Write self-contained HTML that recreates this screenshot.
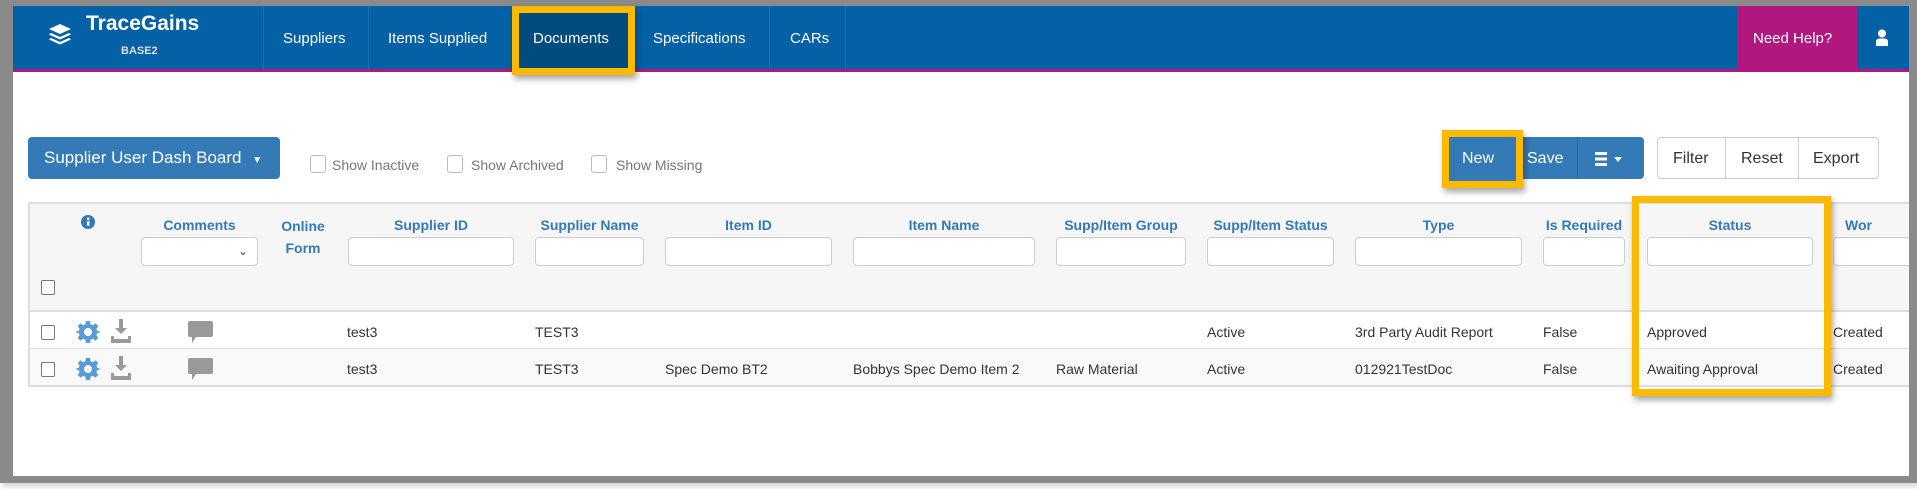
<!DOCTYPE html>
<html><head><meta charset="utf-8"><style>
*{box-sizing:border-box;margin:0;padding:0}
body{width:1917px;height:489px;background:#fff;position:relative;overflow:hidden;font-family:"Liberation Sans",sans-serif}
.a{position:absolute}
.frame{left:0;top:0;width:1917px;height:483px;border:solid #8a8a8a;border-width:6px 8px 7px 13px;box-shadow:2px 4px 4px rgba(0,0,0,.15)}
.nav{left:13px;top:6px;width:1896px;height:63px;background:#0461a5}
.mag{left:13px;top:69px;width:1896px;height:3px;background:#b0177f}
.nt{color:#fff;font-size:15px;top:30px}
.dv{top:6px;width:1px;height:63px;background:#1c70ad}
.hd{color:#337ab7;font-weight:bold;font-size:14px;text-align:center;top:217px}
.in{top:237px;height:29px;background:#fff;border:1px solid #ccc;border-radius:4px}
.td{font-size:14px;color:#333}
.cb{width:13px;height:13px;border:1px solid #777;border-radius:2px;background:#fff}
.y{border:7px solid #fbb900;box-shadow:2px 4px 6px rgba(0,0,0,.35)}
</style></head><body>
<div class="a frame"></div>
<div class="a nav"></div>
<div class="a mag"></div>
<svg class="a" style="left:47px;top:22px" width="26" height="26" viewBox="0 0 26 26"><path d="M13 2L24 7L13 12L2 7Z" fill="#fff"/><path d="M4 11L13 15L22 11L24 12.5L13 17.5L2 12.5Z" fill="#fff"/><path d="M4 16L13 20L22 16L24 17.5L13 22.5L2 17.5Z" fill="#fff"/></svg>
<div class="a" style="left:86px;top:12px;color:#fff;font-size:21px;font-weight:bold">TraceGains</div>
<div class="a" style="left:121px;top:45px;color:#ddd;font-size:11px;font-weight:bold">BASE2</div>
<div class="a dv" style="left:263px"></div><div class="a dv" style="left:368px"></div><div class="a dv" style="left:769px"></div><div class="a dv" style="left:845px"></div>
<div class="a nt" style="left:283px">Suppliers</div>
<div class="a nt" style="left:388px">Items Supplied</div>
<div class="a" style="left:512px;top:6px;width:123px;height:68px;background:#004b80" ></div>
<div class="a y" style="left:512px;top:6px;width:123px;height:69px"></div>
<div class="a nt" style="left:533px">Documents</div>
<div class="a nt" style="left:653px">Specifications</div>
<div class="a nt" style="left:790px">CARs</div>
<div class="a" style="left:1737px;top:6px;width:120px;height:63px;background:#b0177f"></div>
<div class="a nt" style="left:1753px">Need Help?</div>
<svg class="a" style="left:1875px;top:29px" width="14" height="17" viewBox="0 0 14 17"><circle cx="7" cy="4.5" r="4" fill="#fff"/><path d="M1 17V13Q1 9.5 4.5 9.5H9.5Q13 9.5 13 13V17Z" fill="#fff"/></svg>

<div class="a" style="left:28px;top:137px;width:252px;height:42px;background:#337ab7;border-radius:4px;color:#fff;font-size:17px;padding:11px 0 0 16px">Supplier User Dash Board <span style="font-size:10px;margin-left:6px">▼</span></div>
<div class="a cb" style="left:310px;top:155px;width:16px;height:18px;border-color:#bbb;border-radius:3px"></div><div class="a" style="left:332px;top:157px;color:#777;font-size:14px">Show Inactive</div>
<div class="a cb" style="left:447px;top:155px;width:16px;height:18px;border-color:#bbb;border-radius:3px"></div><div class="a" style="left:471px;top:157px;color:#777;font-size:14px">Show Archived</div>
<div class="a cb" style="left:591px;top:155px;width:16px;height:18px;border-color:#bbb;border-radius:3px"></div><div class="a" style="left:616px;top:157px;color:#777;font-size:14px">Show Missing</div>

<div class="a" style="left:1442px;top:137px;width:202px;height:42px;background:#337ab7;border-radius:4px"></div>
<div class="a" style="left:1577px;top:137px;width:1px;height:42px;background:#2a69a0"></div>
<div class="a y" style="left:1442px;top:130px;width:81px;height:58px;background:#337ab7"></div>
<div class="a" style="left:1462px;top:150px;color:#fff;font-size:16px">New</div>
<div class="a" style="left:1527px;top:150px;color:#fff;font-size:16px">Save</div>
<svg class="a" style="left:1595px;top:152px" width="32" height="14"><rect x="0" y="0" width="12" height="3" fill="#fff"/><rect x="0" y="5.5" width="12" height="3" fill="#fff"/><rect x="0" y="11" width="12" height="3" fill="#fff"/><path d="M19 5H27L23 10Z" fill="#fff"/></svg>
<div class="a" style="left:1657px;top:137px;width:222px;height:42px;border:1px solid #ccc;border-radius:4px"></div>
<div class="a" style="left:1725px;top:137px;width:1px;height:42px;background:#ccc"></div>
<div class="a" style="left:1798px;top:137px;width:1px;height:42px;background:#ccc"></div>
<div class="a" style="left:1673px;top:150px;color:#333;font-size:16px">Filter</div>
<div class="a" style="left:1741px;top:150px;color:#333;font-size:16px">Reset</div>
<div class="a" style="left:1813px;top:150px;color:#333;font-size:16px">Export</div>

<div class="a" style="left:28px;top:202px;width:1881px;height:110px;background:#f6f6f6;border-top:2px solid #ddd;border-left:2px solid #ddd;border-bottom:2px solid #ddd"></div>
<div class="a" style="left:28px;top:312px;width:1881px;height:37px;background:#fff;border-left:2px solid #ddd;border-bottom:1px solid #ddd"></div>
<div class="a" style="left:28px;top:349px;width:1881px;height:38px;background:#f9f9f9;border-left:2px solid #ddd;border-bottom:2px solid #ddd"></div>

<svg class="a" style="left:81px;top:215px" width="14" height="14"><circle cx="7" cy="7" r="7" fill="#337ab7"/><rect x="6" y="6" width="2.4" height="5" fill="#fff"/><circle cx="7.2" cy="3.8" r="1.3" fill="#fff"/></svg>
<div class="a hd" style="left:141px;width:117px">Comments</div>
<div class="a in" style="left:141px;width:117px"></div><div class="a" style="left:238px;top:244px;color:#444;font-size:12px">⌄</div>
<div class="a hd" style="left:278px;width:50px;line-height:22px;top:215px">Online<br>Form</div>
<div class="a hd" style="left:348px;width:166px">Supplier ID</div><div class="a in" style="left:348px;width:166px"></div>
<div class="a hd" style="left:535px;width:109px">Supplier Name</div><div class="a in" style="left:535px;width:109px"></div>
<div class="a hd" style="left:665px;width:167px">Item ID</div><div class="a in" style="left:665px;width:167px"></div>
<div class="a hd" style="left:853px;width:182px">Item Name</div><div class="a in" style="left:853px;width:182px"></div>
<div class="a hd" style="left:1050px;width:142px">Supp/Item Group</div><div class="a in" style="left:1056px;width:130px"></div>
<div class="a hd" style="left:1202px;width:137px">Supp/Item Status</div><div class="a in" style="left:1207px;width:127px"></div>
<div class="a hd" style="left:1355px;width:167px">Type</div><div class="a in" style="left:1355px;width:167px"></div>
<div class="a hd" style="left:1538px;width:92px">Is Required</div><div class="a in" style="left:1543px;width:82px"></div>
<div class="a hd" style="left:1647px;width:166px">Status</div><div class="a in" style="left:1647px;width:166px"></div>
<div class="a hd" style="left:1845px">Wor</div><div class="a in" style="left:1833px;width:90px"></div>
<div class="a cb" style="left:41px;top:280px;width:14px;height:15px"></div>

<div class="a cb" style="left:41px;top:325px;width:14px;height:15px"></div>
<div class="a cb" style="left:41px;top:362px;width:14px;height:15px"></div>
<svg class="a" style="left:76px;top:320px" width="24" height="24" viewBox="0 0 24 24"><path fill="#5b9bd5" fill-rule="evenodd" d="M10 1H14L14.6 4.3L16.8 5.2L19.5 3.3L22.3 6.1L20.4 8.8L21.3 11L24 11.5V12.5L21.3 13L20.4 15.2L22.3 17.9L19.5 20.7L16.8 18.8L14.6 19.7L14 23H10L9.4 19.7L7.2 18.8L4.5 20.7L1.7 17.9L3.6 15.2L2.7 13L0 12.5V11.5L2.7 11L3.6 8.8L1.7 6.1L4.5 3.3L7.2 5.2L9.4 4.3Z M12 8A4 4 0 1 0 12 16A4 4 0 1 0 12 8Z"/></svg>
<svg class="a" style="left:76px;top:357px" width="24" height="24" viewBox="0 0 24 24"><path fill="#5b9bd5" fill-rule="evenodd" d="M10 1H14L14.6 4.3L16.8 5.2L19.5 3.3L22.3 6.1L20.4 8.8L21.3 11L24 11.5V12.5L21.3 13L20.4 15.2L22.3 17.9L19.5 20.7L16.8 18.8L14.6 19.7L14 23H10L9.4 19.7L7.2 18.8L4.5 20.7L1.7 17.9L3.6 15.2L2.7 13L0 12.5V11.5L2.7 11L3.6 8.8L1.7 6.1L4.5 3.3L7.2 5.2L9.4 4.3Z M12 8A4 4 0 1 0 12 16A4 4 0 1 0 12 8Z"/></svg>
<svg class="a" style="left:110px;top:319px" width="22" height="24"><path d="M9 0H13V9H17L11 15L5 9H9Z M1 17H4V20H18V17H21V24H1Z" fill="#999"/></svg>
<svg class="a" style="left:110px;top:356px" width="22" height="24"><path d="M9 0H13V9H17L11 15L5 9H9Z M1 17H4V20H18V17H21V24H1Z" fill="#999"/></svg>
<svg class="a" style="left:188px;top:321px" width="25" height="22"><path d="M2 0H23Q25 0 25 2V14Q25 16 23 16H8L4 22V16H2Q0 16 0 14V2Q0 0 2 0Z" fill="#999"/></svg>
<svg class="a" style="left:188px;top:358px" width="25" height="22"><path d="M2 0H23Q25 0 25 2V14Q25 16 23 16H8L4 22V16H2Q0 16 0 14V2Q0 0 2 0Z" fill="#999"/></svg>

<div class="a td" style="left:347px;top:324px">test3</div><div class="a td" style="left:535px;top:324px">TEST3</div>
<div class="a td" style="left:1207px;top:324px">Active</div><div class="a td" style="left:1355px;top:324px">3rd Party Audit Report</div>
<div class="a td" style="left:1543px;top:324px">False</div><div class="a td" style="left:1647px;top:324px">Approved</div><div class="a td" style="left:1833px;top:324px">Created</div>
<div class="a td" style="left:347px;top:361px">test3</div><div class="a td" style="left:535px;top:361px">TEST3</div>
<div class="a td" style="left:665px;top:361px">Spec Demo BT2</div><div class="a td" style="left:853px;top:361px">Bobbys Spec Demo Item 2</div>
<div class="a td" style="left:1056px;top:361px">Raw Material</div>
<div class="a td" style="left:1207px;top:361px">Active</div><div class="a td" style="left:1355px;top:361px">012921TestDoc</div>
<div class="a td" style="left:1543px;top:361px">False</div><div class="a td" style="left:1647px;top:361px">Awaiting Approval</div><div class="a td" style="left:1833px;top:361px">Created</div>

<div class="a y" style="left:1632px;top:196px;width:199px;height:200px"></div>
<div class="a" style="left:1909px;top:0;width:8px;height:483px;background:#8a8a8a"></div>
</body></html>
